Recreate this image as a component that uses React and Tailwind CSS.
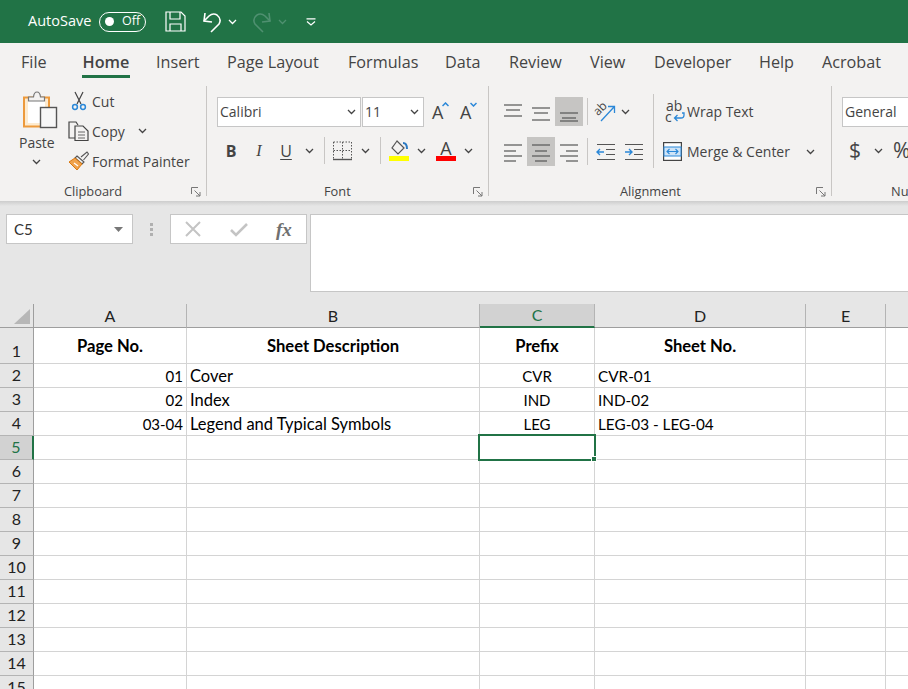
import React from 'react';

const ui = { fontFamily: '"Open Sans", "Noto Sans", sans-serif' };
const cal = { fontFamily: 'Lato, "Open Sans", sans-serif' };

const Chevron = ({ color = '#444444' }) => (
  <svg width="9" height="6" viewBox="0 0 9 6" fill="none">
    <polyline points="1,1 4.5,4.5 8,1" stroke={color} strokeWidth="1.3" />
  </svg>
);

const Launcher = () => (
  <svg width="10" height="10" viewBox="0 0 10 10" fill="none" stroke="#777777" strokeWidth="1">
    <polyline points="7,0.5 0.5,0.5 0.5,7" />
    <path d="M3.5 3.5 L9 9 M9 5 V9 H5" />
  </svg>
);

const Sep = ({ className }) => <div className={`w-px bg-[#c8c6c4] ${className}`} />;

const Lines = ({ lines }) => (
  <svg width="20" height="20" viewBox="0 0 20 20" stroke="#555555" strokeWidth="1.2">
    {lines.map((l, i) => (
      <line key={i} x1={l[0]} x2={l[1]} y1={l[2]} y2={l[2]} />
    ))}
  </svg>
);

const AlignSlot = ({ lines, active }) => (
  <div className={`w-[28px] h-[29px] flex items-center justify-center ${active ? 'bg-[#c6c5c3]' : ''}`}>
    <Lines lines={lines} />
  </div>
);

const Footer = ({ label, left, launcher = true }) => (
  <div className="h-[18px] pt-[2px] flex items-center text-[12.8px] text-[#444444] whitespace-nowrap">
    <span style={{ marginLeft: left }}>{label}</span>
    {launcher && <span className="ml-auto mr-[5px] flex"><Launcher /></span>}
  </div>
);

const SaveIcon = () => (
  <svg width="21" height="21" viewBox="0 0 21 21" fill="none" stroke="#ffffff" strokeWidth="1.2">
    <path d="M1 1 H16 L20 5 V20 H1 Z" />
    <path d="M5 1 V8 H15 V1" />
    <path d="M5 20 V13 H16 V20" />
  </svg>
);

const UndoIcon = ({ color, flip }) => (
  <svg width="20" height="22" viewBox="0 0 20 22" fill="none" stroke={color} strokeWidth="1.6" className={flip ? '-scale-x-100' : ''}>
    <polyline points="3,2 2,10 10,11" />
    <path d="M2 10 L7 5 Q11 1.5 15 4 Q20 8 17 13 L9 21" />
  </svg>
);

const PasteIcon = () => (
  <svg width="36" height="38" viewBox="0 0 36 38" fill="none">
    <rect x="2" y="6.5" width="25" height="29" fill="#fdebd0" stroke="#ed9a3c" strokeWidth="2" />
    <rect x="6" y="9" width="17" height="23" fill="#ffffff" />
    <path d="M6.5 10 V6 H11.5 Q12 1 15 1 Q18 1 18.5 6 H22.5 V10 Z" fill="#f3f2f1" stroke="#777777" strokeWidth="1.2" />
    <rect x="18.5" y="16.5" width="16" height="20" fill="#f7f7f7" stroke="#555555" strokeWidth="1.4" />
  </svg>
);

const CutIcon = () => (
  <svg width="16" height="20" viewBox="0 0 16 20" fill="none">
    <path d="M4 1 L10 13 M12 1 L6 13" stroke="#444444" strokeWidth="1.2" />
    <circle cx="4" cy="16" r="2.4" stroke="#2b88d8" strokeWidth="1.5" />
    <circle cx="12" cy="16" r="2.4" stroke="#2b88d8" strokeWidth="1.5" />
  </svg>
);

const CopyIcon = () => (
  <svg width="21" height="20" viewBox="0 0 21 20" fill="none" stroke="#444444" strokeWidth="1.2">
    <path d="M7 17 H1 V1 H8 L10 4" />
    <path d="M7 5 H15 L20 10 V19.5 H7 Z" fill="#f3f2f1" />
    <path d="M10 11 H17 M10 14 H17 M10 17 H17" strokeWidth="1" stroke="#666666" />
  </svg>
);

const PainterIcon = () => (
  <svg width="21" height="20" viewBox="0 0 21 20" fill="none">
    <path d="M13 6 L19 1 L20.5 3 L15.5 9" fill="#f3f2f1" stroke="#555555" strokeWidth="1.1" />
    <path d="M9 5 L16 11 L14 13 L7 7 Z" fill="#f3f2f1" stroke="#555555" strokeWidth="1.1" />
    <path d="M7 7 L14 13 L9 19 L1 11 Z" fill="#f0a24b" stroke="#d9780f" strokeWidth="1" />
    <path d="M6 12 L10 15" stroke="#ffffff" strokeWidth="1.2" />
  </svg>
);

const BorderIcon = () => (
  <svg width="19" height="20" viewBox="0 0 19 20" fill="none" stroke="#555555">
    <path d="M0.5 1 H18.5 M0.5 1 V18 M18.5 1 V18 M0.5 9.5 H18.5 M9.5 1 V18" strokeDasharray="1.5 1.5" />
    <path d="M0 18.5 H19" strokeWidth="1.4" />
  </svg>
);

const FillIcon = () => (
  <div className="w-[20px] h-[21px] flex flex-col">
    <svg width="20" height="16" viewBox="0 0 20 16" fill="none">
      <path d="M8 1 L3 8 L9 14 L15 8 Z" stroke="#555555" strokeWidth="1.2" />
      <path d="M14 3 Q18 3 18 9" stroke="#2b79c2" strokeWidth="2" />
    </svg>
    <div className="h-[5px] bg-[#ffff00]" />
  </div>
);

const ColorA = () => (
  <div className="w-[20px] h-[21px] flex flex-col items-center">
    <span className="h-[16px] text-[18px] leading-[16px] text-[#444444]">A</span>
    <div className="h-[5px] w-full bg-[#ff0000]" />
  </div>
);

const GrowA = ({ up }) => (
  <div className="w-[18px] h-[24px] flex items-start">
    <span className="text-[18px] leading-[24px] text-[#444444]">A</span>
    <svg width="7" height="5" viewBox="0 0 7 5" fill="none" stroke="#2b88d8" strokeWidth="1.5" className="mt-[2px] -ml-[1px] shrink-0">
      <polyline points={up ? '0.5,4 3.5,1 6.5,4' : '0.5,1 3.5,4 6.5,1'} />
    </svg>
  </div>
);

const OrientIcon = () => (
  <svg width="22" height="22" viewBox="0 0 22 22" fill="none" className="overflow-visible">
    <text x="0" y="12" fontSize="12" fill="#444444" transform="rotate(-45 6 9)" fontFamily="Open Sans">ab</text>
    <path d="M7 20 L20 6 M14 5.5 H20.5 V12" stroke="#2b88d8" strokeWidth="1.3" />
  </svg>
);

const IndentIcon = ({ right }) => (
  <svg width="20" height="20" viewBox="0 0 20 20" fill="none">
    <path d="M1 2.5 H19 M10 7.5 H19 M10 12.5 H19 M1 17.5 H19" stroke="#555555" strokeWidth="1.2" />
    {right ? (
      <path d="M1 10 H8 M5 7 L8 10 L5 13" stroke="#2b88d8" strokeWidth="1.4" />
    ) : (
      <path d="M8 10 H1 M4 7 L1 10 L4 13" stroke="#2b88d8" strokeWidth="1.4" />
    )}
  </svg>
);

const WrapIcon = () => (
  <div className="relative w-[18px] h-[24px] text-[14px] leading-[11px] text-[#444444]">
    <div className="pl-[1px]">ab</div>
    <div>c</div>
    <svg width="12" height="10" viewBox="0 0 12 10" fill="none" stroke="#2b88d8" strokeWidth="1.3" className="absolute left-[8px] top-[12px]">
      <path d="M9 1 H11 V3 Q11 6 8 6 H2 M4.5 3 L1.5 6 L4.5 9" />
    </svg>
  </div>
);

const MergeIcon = () => (
  <svg width="19" height="19" viewBox="0 0 19 19" fill="none">
    <rect x="0.6" y="0.6" width="17.8" height="17.8" stroke="#444444" strokeWidth="1.2" fill="#ffffff" />
    <rect x="1" y="5" width="17" height="9" fill="#cfe4f7" stroke="#2b88d8" />
    <path d="M4 9.5 H15 M6.5 7 L4 9.5 L6.5 12 M12.5 7 L15 9.5 L12.5 12" stroke="#2b88d8" strokeWidth="1.1" />
  </svg>
);

const tabs = [
  ['File', 'w-[61px]'],
  ['Home', 'w-[74px]'],
  ['Insert', 'w-[71px]'],
  ['Page Layout', 'w-[121px]'],
  ['Formulas', 'w-[97px]'],
  ['Data', 'w-[64px]'],
  ['Review', 'w-[81px]'],
  ['View', 'w-[64px]'],
  ['Developer', 'w-[105px]'],
  ['Help', 'w-[63px]'],
  ['Acrobat', 'w-[80px]'],
];

const TitleBar = () => (
  <div className="h-[43px] bg-[#217346] flex items-center text-white shrink-0">
    <span className="ml-[28px] w-[71px] text-[14.5px] leading-none">AutoSave</span>
    <div className="w-[47px] h-[20px] border border-white rounded-full flex items-center">
      <div className="ml-[5px] w-[9px] h-[9px] rounded-full bg-white" />
      <span className="ml-[8px] text-[12.5px] leading-none">Off</span>
    </div>
    <div className="ml-[19px] flex"><SaveIcon /></div>
    <div className="ml-[16px] flex"><UndoIcon color="#ffffff" /></div>
    <div className="ml-[6px] flex"><Chevron color="#ffffff" /></div>
    <div className="ml-[15px] flex"><UndoIcon color="#4f9070" flip /></div>
    <div className="ml-[6px] flex"><Chevron color="#4f9070" /></div>
    <svg width="10" height="8" viewBox="0 0 10 8" fill="none" stroke="#ffffff" strokeWidth="1.2" className="ml-[19px]">
      <path d="M0.5 0.8 H9.5 M1 3.5 L5 7 L9 3.5" />
    </svg>
  </div>
);

const TabBar = () => (
  <div className="h-[42px] pl-[21px] flex text-[16.2px] text-[#444444] whitespace-nowrap shrink-0">
    {tabs.map(([name, width]) => (
      <div key={name} className={`${width} shrink-0`}>
        {name === 'Home' ? (
          <span className="inline-flex items-center justify-center w-[48px] h-[35px] pt-[6px] border-b-[3px] border-[#217346] font-semibold">
            {name}
          </span>
        ) : (
          <span className="inline-flex items-center h-[35px] pt-[6px] pb-[3px]">{name}</span>
        )}
      </div>
    ))}
  </div>
);

const Clipboard = () => (
  <div className="w-[206px] shrink-0 flex flex-col">
    <div className="h-[97px] flex text-[14px] text-[#444444]">
      <div className="w-[68px] pt-[6px] pl-[22px] flex flex-col">
        <PasteIcon />
        <div className="-ml-[3px] mt-[4px] leading-[20px]">Paste</div>
        <div className="mt-[6px] ml-[10px] flex"><Chevron /></div>
      </div>
      <div className="pt-[1px] flex flex-col">
        <div className="h-[30px] flex items-center">
          <div className="w-[24px] pl-[3px] flex"><CutIcon /></div>Cut
        </div>
        <div className="h-[30px] flex items-center">
          <div className="w-[24px] flex"><CopyIcon /></div>Copy
          <div className="ml-[13px] flex"><Chevron /></div>
        </div>
        <div className="h-[30px] flex items-center whitespace-nowrap">
          <div className="w-[24px] flex"><PainterIcon /></div>Format Painter
        </div>
      </div>
    </div>
    <Footer label="Clipboard" left={64} />
  </div>
);

const Font = () => (
  <div className="w-[281px] shrink-0 flex flex-col">
    <div className="h-[97px] pl-[10px] pt-[12px] flex flex-col">
      <div className="flex items-center">
        <div className="w-[144px] h-[30px] bg-white border border-[#c6c6c6] flex items-center pl-[2px] pr-[4px] pb-[2px] text-[14px] text-[#444444]">
          Calibri<span className="ml-auto flex pt-[2px]"><Chevron /></span>
        </div>
        <div className="ml-px w-[62px] h-[30px] bg-white border border-[#c6c6c6] flex items-center pl-[2px] pr-[4px] pb-[2px] text-[14px] text-[#444444]">
          11<span className="ml-auto flex pt-[2px]"><Chevron /></span>
        </div>
        <div className="ml-[8px]"><GrowA up /></div>
        <div className="ml-[10px]"><GrowA /></div>
      </div>
      <div className="mt-[10px] h-[27px] flex items-center text-[#444444]">
        <div className="ml-[3px] w-[22px] text-center text-[16px] font-bold">B</div>
        <div className="w-[34px] text-center text-[16px] italic" style={{ fontFamily: '"Liberation Serif", serif' }}>I</div>
        <div className="w-[20px] text-center text-[16px] underline underline-offset-2">U</div>
        <div className="w-[26px] flex justify-center"><Chevron /></div>
        <Sep className="ml-[2px] h-[27px]" />
        <div className="ml-[8px] flex"><BorderIcon /></div>
        <div className="w-[26px] flex justify-center"><Chevron /></div>
        <Sep className="ml-[2px] h-[27px]" />
        <div className="ml-[8px]"><FillIcon /></div>
        <div className="w-[24px] flex justify-center"><Chevron /></div>
        <div className="ml-[3px]"><ColorA /></div>
        <div className="w-[24px] flex justify-center"><Chevron /></div>
      </div>
    </div>
    <Footer label="Font" left={117} />
  </div>
);

const Alignment = () => (
  <div className="w-[342px] shrink-0 flex flex-col">
    <div className="h-[97px] flex">
      <div className="w-[164px] pl-[10px] pt-[12px] flex flex-col shrink-0">
        <div className="flex items-center">
          <AlignSlot lines={[[1, 19, 3], [3, 17, 8], [1, 19, 14]]} />
          <AlignSlot lines={[[1, 19, 6], [3, 17, 11], [1, 19, 18]]} />
          <AlignSlot active lines={[[1, 19, 11], [3, 17, 16], [1, 19, 19]]} />
          <Sep className="ml-[4px] h-[27px]" />
          <div className="ml-[6px] w-[24px] flex"><OrientIcon /></div>
          <div className="w-[14px] flex justify-center"><Chevron /></div>
        </div>
        <div className="mt-[11px] flex items-center">
          <AlignSlot lines={[[1, 19, 3], [1, 13, 9], [1, 19, 14], [1, 13, 19]]} />
          <AlignSlot active lines={[[1, 19, 3], [4, 16, 9], [1, 19, 14], [4, 16, 19]]} />
          <AlignSlot lines={[[1, 19, 3], [7, 19, 9], [1, 19, 14], [7, 19, 19]]} />
          <Sep className="ml-[4px] h-[27px]" />
          <div className="ml-[4px] w-[28px] flex justify-center"><IndentIcon /></div>
          <div className="w-[28px] flex justify-center"><IndentIcon right /></div>
        </div>
      </div>
      <Sep className="mt-[9px] h-[74px] shrink-0" />
      <div className="flex-1 flex flex-col pt-[12px] text-[14px] text-[#444444] whitespace-nowrap">
        <div className="h-[29px] pl-[11px] flex items-center">
          <WrapIcon />
          <span className="ml-[4px]">Wrap Text</span>
        </div>
        <div className="mt-[11px] h-[29px] pl-[9px] pr-[16px] flex items-center">
          <MergeIcon />
          <span className="ml-[5px]">Merge &amp; Center</span>
          <span className="ml-auto flex"><Chevron /></span>
        </div>
      </div>
    </div>
    <Footer label="Alignment" left={131} />
  </div>
);

const NumberGroup = () => (
  <div className="w-[200px] shrink-0 flex flex-col">
    <div className="h-[97px] pl-[10px] pt-[12px] flex flex-col text-[#444444]">
      <div className="h-[30px] w-[190px] bg-white border border-[#c6c6c6] flex items-center pl-[2px] pb-[2px] text-[14px]">General</div>
      <div className="mt-[10px] h-[27px] flex items-center text-[21px]">
        <span className="w-[26px] text-center">$</span>
        <div className="w-[20px] flex justify-center"><Chevron /></div>
        <span className="ml-[5px]">%</span>
      </div>
    </div>
    <Footer label="Number" left={59} launcher={false} />
  </div>
);

const Ribbon = () => (
  <div className="h-[116px] flex shrink-0">
    <Clipboard />
    <Sep className="mt-px h-[110px] shrink-0" />
    <Font />
    <Sep className="mt-px h-[110px] shrink-0" />
    <Alignment />
    <Sep className="mt-px h-[110px] shrink-0" />
    <NumberGroup />
  </div>
);

const FormulaBar = () => (
  <div className="h-[103px] shrink-0 flex flex-col">
    <div className="h-[5px] bg-linear-to-b from-[#cdcdcd] to-[#e6e6e6]" />
    <div className="pt-[8px] pl-[6px] flex items-start">
      <div className="w-[127px] h-[30px] bg-white border border-[#c6c6c6] flex items-center pl-[7px] pr-[9px] text-[15px] text-[#333333]" style={cal}>
        C5
        <svg width="9" height="5" viewBox="0 0 9 5" className="ml-auto"><polygon points="0,0 9,0 4.5,5" fill="#777777" /></svg>
      </div>
      <div className="w-[37px] h-[30px] flex flex-col items-center justify-center gap-[2px]">
        <div className="w-[3px] h-[3px] bg-[#b0b0b0]" />
        <div className="w-[3px] h-[3px] bg-[#b0b0b0]" />
        <div className="w-[3px] h-[3px] bg-[#b0b0b0]" />
      </div>
      <div className="w-[137px] h-[30px] bg-white border border-[#c6c6c6] flex items-center">
        <svg width="16" height="16" viewBox="0 0 16 16" className="ml-[14px]" stroke="#c4c4c4" strokeWidth="2" fill="none"><path d="M1 1 L15 15 M15 1 L1 15" /></svg>
        <svg width="18" height="15" viewBox="0 0 18 15" className="ml-[29px]" stroke="#c4c4c4" strokeWidth="2.6" fill="none"><path d="M1 8 L6 13 L17 2" /></svg>
        <span className="ml-[28px] text-[19px] italic font-bold text-[#707070] leading-none" style={{ fontFamily: '"Liberation Serif", serif' }}>fx</span>
      </div>
      <div className="ml-[3px] flex-1 h-[78px] bg-white border border-r-0 border-[#c6c6c6]" />
    </div>
  </div>
);

const colClass = 'grid grid-cols-[34px_153px_293px_115px_211px_80px_1fr]';

const ColHead = ({ label, active }) => (
  <div className={`h-[24px] flex items-center justify-center border-r border-[#b4b4b4] text-[16px] ${active ? 'bg-[#d2d2d2] text-[#217346] border-b-2 border-b-[#217346]' : 'border-b border-b-[#9e9e9e] text-[#222222]'}`}>
    {label}
  </div>
);

const rows = [
  { n: 1, h: 'h-[36px]', a: 'Page No.', b: 'Sheet Description', c: 'Prefix', d: 'Sheet No.', bold: true },
  { n: 2, a: '01', b: 'Cover', c: 'CVR', d: 'CVR-01' },
  { n: 3, a: '02', b: 'Index', c: 'IND', d: 'IND-02' },
  { n: 4, a: '03-04', b: 'Legend and Typical Symbols', c: 'LEG', d: 'LEG-03 - LEG-04' },
  ...[5, 6, 7, 8, 9, 10, 11, 12, 13, 14, 15].map((n) => ({ n })),
];

const cell = 'min-h-0 border-r border-b border-[#d4d4d4] flex items-center text-black whitespace-nowrap leading-[20px]';

const Row = ({ n, h = 'h-[24px]', a, b, c, d, bold }) => {
  const active = n === 5;
  return (
    <div className={`${colClass} ${h}`}>
      <div className={`flex items-end justify-center pb-[1px] border-b text-[16px] leading-[22px] ${active ? 'bg-[#d2d2d2] text-[#217346] border-r-2 border-r-[#217346] border-b-[#b4b4b4]' : 'bg-[#e6e6e6] text-[#222222] border-r border-r-[#9e9e9e] border-b-[#b4b4b4]'}`}>
        {n}
      </div>
      <div className={`${cell} ${bold ? 'justify-center font-bold text-[16.6px]' : 'justify-end pr-[3px] text-[15px]'}`}>{a}</div>
      <div className={`${cell} ${bold ? 'justify-center font-bold text-[16.6px]' : 'pl-[3px] text-[16.5px]'}`}>{b}</div>
      <div className={`${cell} justify-center ${bold ? 'font-bold text-[16.6px]' : 'text-[15px]'}`}>{c}</div>
      <div className={`${cell} ${bold ? 'justify-center font-bold text-[16.6px]' : 'pl-[3px] text-[15.3px]'}`}>{d}</div>
      <div className={cell} />
      <div className="border-b border-[#d4d4d4]" />
    </div>
  );
};

const Sheet = () => (
  <div className="relative flex-1 min-h-0 overflow-hidden bg-white" style={cal}>
    <div className={`${colClass} h-[24px] bg-[#e6e6e6]`}>
      <div className="border-r border-r-[#9e9e9e] border-b border-b-[#9e9e9e] flex items-center justify-end pr-[3px] pt-[1px]">
        <svg width="16" height="15" viewBox="0 0 16 15"><polygon points="16,0 16,15 0,15" fill="#b7b7b7" /></svg>
      </div>
      <ColHead label="A" />
      <ColHead label="B" />
      <ColHead label="C" active />
      <ColHead label="D" />
      <ColHead label="E" />
      <div className="border-b border-b-[#9e9e9e]" />
    </div>
    {rows.map((r) => (
      <Row key={r.n} {...r} />
    ))}
    <div className="absolute left-[478px] top-[130px] w-[118px] h-[27px] border-2 border-[#217346]">
      <div className="absolute -right-[3px] -bottom-[3px] w-[6px] h-[6px] bg-[#217346] border border-white" />
    </div>
  </div>
);

export default function App() {
  return (
    <div className="w-[908px] h-[689px] overflow-hidden flex flex-col bg-[#e6e6e6]" style={ui}>
      <TitleBar />
      <div className="bg-[#f3f2f1] overflow-hidden shrink-0">
        <TabBar />
        <Ribbon />
      </div>
      <FormulaBar />
      <Sheet />
    </div>
  );
}
